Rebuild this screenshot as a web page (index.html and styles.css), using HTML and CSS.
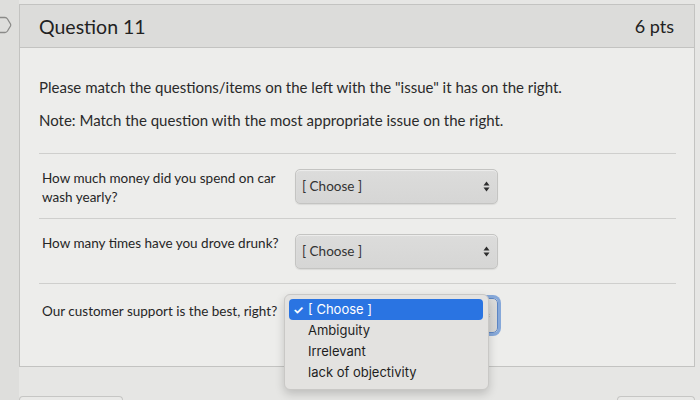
FILE: index.html
```html
<!DOCTYPE html>
<html lang="en">
<head>
<meta charset="utf-8">
<title>Question 11</title>
<link rel="stylesheet" href="styles.css">
</head>
<body>
<div class="page">
  <div class="strip">
    <svg class="tab-icon" width="12" height="18" viewBox="0 0 12 18"><path d="M0 1.5 H5 Q6.5 1.5 7.5 3 L10.5 8 Q11 9 10.5 10 L7.5 15 Q6.5 16.5 5 16.5 H0" fill="none" stroke="#8a8a88" stroke-width="1.3"/></svg>
  </div>
  <div class="main">
    <div class="card">
      <div class="card-header">
        <span class="q-title">Question 11</span>
        <span class="q-pts">6 pts</span>
      </div>
      <div class="card-body">
        <p class="instr">Please match the questions/items on the left with the "issue" it has on the right.</p>
        <p class="instr instr-last">Note: Match the question with the most appropriate issue on the right.</p>
        <div class="rows">
          <div class="row">
            <div class="question">How much money did you spend on car wash yearly?</div>
            <div class="select">
              <span class="sel-text">[ Choose ]</span>
              <svg class="arrows" width="7" height="11" viewBox="0 0 7 11"><path d="M3.5 0.5 L6.5 4.5 H0.5 Z M3.5 10.5 L6.5 6.5 H0.5 Z" fill="#2e2e2e"/></svg>
            </div>
          </div>
          <div class="row">
            <div class="question">How many times have you drove drunk?</div>
            <div class="select">
              <span class="sel-text">[ Choose ]</span>
              <svg class="arrows" width="7" height="11" viewBox="0 0 7 11"><path d="M3.5 0.5 L6.5 4.5 H0.5 Z M3.5 10.5 L6.5 6.5 H0.5 Z" fill="#2e2e2e"/></svg>
            </div>
          </div>
          <div class="row row-last">
            <div class="question">Our customer support is the best, right?</div>
            <div class="select select-focus">
              <span class="sel-text sel-hidden"></span>
              <svg class="arrows" width="7" height="11" viewBox="0 0 7 11"><path d="M3.5 0.5 L6.5 4.5 H0.5 Z M3.5 10.5 L6.5 6.5 H0.5 Z" fill="#2e2e2e"/></svg>
              <div class="menu">
                <div class="menu-item selected"><span class="check">✓</span><span>[ Choose ]</span></div>
                <div class="menu-item"><span class="check"></span><span>Ambiguity</span></div>
                <div class="menu-item"><span class="check"></span><span>Irrelevant</span></div>
                <div class="menu-item"><span class="check"></span><span>lack of objectivity</span></div>
              </div>
            </div>
          </div>
        </div>
      </div>
    </div>
    <div class="footer">
      <div class="btn btn-left"></div>
      <div class="btn btn-right"></div>
    </div>
  </div>
</div>
</body>
</html>
```

FILE: styles.css
```css
html, body {
  margin: 0;
  padding: 0;
}
body {
  background: #e6e6e4;
  font-family: Lato, "Open Sans", sans-serif;
  color: #2b2b2b;
  width: 700px;
  height: 400px;
  overflow: hidden;
}
.page {
  display: flex;
  height: 400px;
}
.strip {
  width: 19px;
  flex: none;
  background: #dededc;
  padding-top: 16px;
  box-sizing: border-box;
}
.tab-icon {
  display: block;
}
.main {
  flex: none;
  width: 676px;
  padding-top: 4px;
  display: flex;
  flex-direction: column;
}
.card {
  border: 1px solid #c3c3c1;
  background: #ededeb;
}
.card-header {
  height: 42px;
  background: #dcdcda;
  border-bottom: 1px solid #c3c3c1;
  display: flex;
  align-items: center;
  justify-content: space-between;
  padding: 0 20px 0 19px;
}
.q-title {
  font-size: 19.5px;
  color: #222;
}
.q-pts {
  font-size: 18px;
  color: #222;
}
.card-body {
  padding: 30px 18px 0 19px;
}
.instr {
  margin: 0 0 15px;
  font-size: 15px;
  line-height: 18px;
  color: #2a2a2a;
}
.instr-last {
  margin-bottom: 24px;
}
.rows {
  border-top: 1px solid #cfcfcd;
}
.row {
  display: flex;
  align-items: flex-start;
  padding: 15px 0 14px 3px;
  border-bottom: 1px solid #cfcfcd;
}
.row-last {
  border-bottom: none;
  padding-top: 14px;
  padding-bottom: 33px;
}
.question {
  width: 253px;
  flex: none;
  font-size: 13.5px;
  line-height: 19px;
  margin: 0 0 -4px;
  color: #262626;
  padding-right: 4px;
  box-sizing: border-box;
}
.row-last .question {
  margin-top: 4px;
}
.select {
  position: relative;
  width: 203px;
  height: 35px;
  box-sizing: border-box;
  border: 1px solid #c4c4c2;
  border-radius: 5px;
  background: linear-gradient(#dcdcdb, #d6d6d5);
  box-shadow: inset 0 1px 1px rgba(255,255,255,0.5), 0 1px 1px rgba(0,0,0,0.08);
  display: flex;
  align-items: center;
  justify-content: space-between;
  padding: 0 7px 0 6px;
}
.sel-text {
  font-size: 13.5px;
  color: #333;
  position: relative;
  top: -1px;
}
.arrows {
  display: block;
}
.select-focus {
  box-shadow: 0 0 0 3px #86a8d9;
  border-color: #5d86c4;
}
.menu {
  position: absolute;
  left: -12px;
  top: -5px;
  width: 205px;
  box-sizing: border-box;
  padding: 4px 5px 6px 4px;
  background: #e3e2e0;
  border: 1px solid #c9c8c6;
  border-radius: 6px;
  box-shadow: 0 4px 10px rgba(0,0,0,0.18);
  font-family: Inter, "Open Sans", sans-serif;
  font-size: 13px;
  color: #1e1e1e;
  z-index: 5;
}
.menu-item {
  height: 21px;
  line-height: 21px;
  padding-left: 4px;
  display: flex;
  border-radius: 4px;
}
.menu-item.selected {
  background: #2a74e2;
  color: #fff;
}
.check {
  flex: none;
  width: 15px;
  font-size: 12px;
  font-weight: 700;
}
.footer {
  display: flex;
  justify-content: space-between;
  margin-top: 29px;
}
.btn {
  height: 4px;
  border: 1px solid #c6c6c4;
  border-bottom: none;
  border-radius: 4px 4px 0 0;
  background: #e9e9e7;
}
.btn-left {
  width: 102px;
}
.btn-right {
  width: 76px;
}
```
